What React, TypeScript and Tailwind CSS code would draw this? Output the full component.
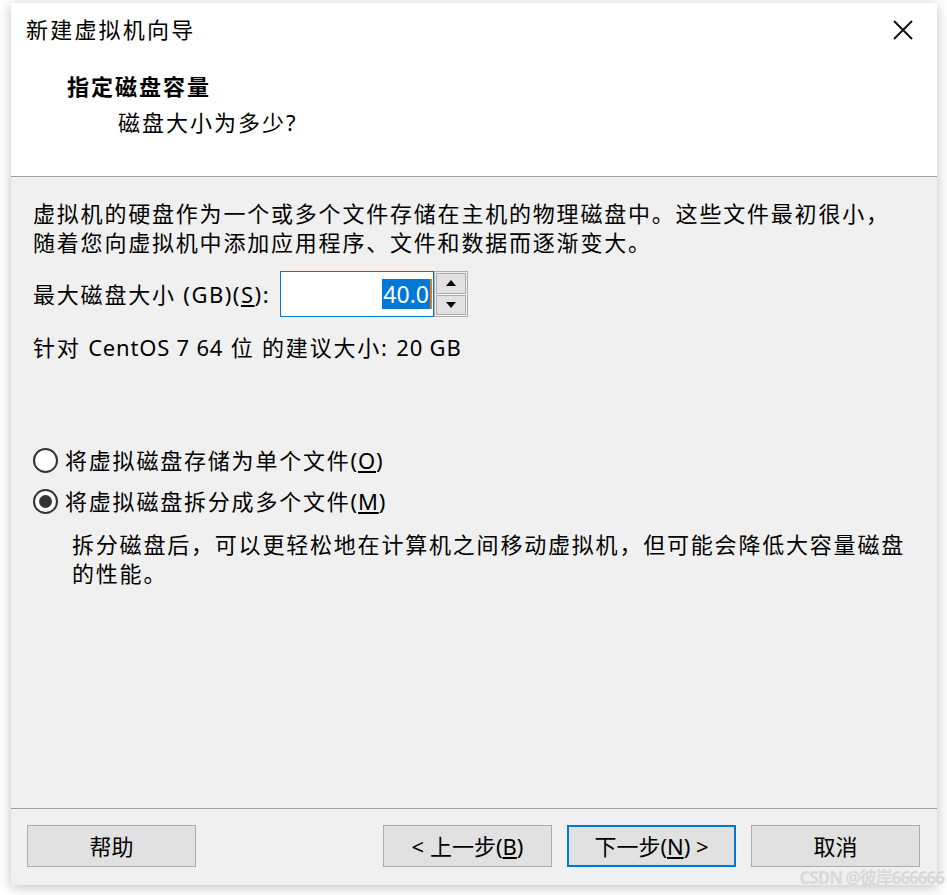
import React from "react";

const font = { fontFamily: '"Noto Sans", "Noto Sans CJK SC", sans-serif' };

function Radio({ checked }: { checked?: boolean }) {
  return (
    <span className="flex h-[25px] w-[25px] shrink-0 items-center justify-center rounded-full border-2 border-[#333333] bg-white">
      {checked && <span className="h-[13px] w-[13px] rounded-full bg-[#333333]" />}
    </span>
  );
}

function Btn({ children, primary }: { children: React.ReactNode; primary?: boolean }) {
  return (
    <button
      className={
        primary
          ? "h-[42px] w-[169px] border-2 border-[#0078d7] bg-[#e1e1e1] text-[22px] text-black"
          : "h-[42px] w-[169px] border border-[#adadad] bg-[#e1e1e1] text-[22px] text-black"
      }
    >
      {children}
    </button>
  );
}

export default function App() {
  return (
    <div className="relative h-[895px] w-[947px] overflow-hidden bg-white" style={font}>
      <div className="ml-[11px] mt-[3px] flex h-[882px] w-[926px] flex-col bg-[#f0f0f0] shadow-[0_2px_12px_rgba(0,0,0,0.25)]">
        {/* header */}
        <div className="h-[174px] border-b border-[#a0a0a0] bg-white">
          <div className="flex items-center justify-between pl-[15px] pr-[22px] pt-[10px]">
            <span className="text-[22px] tracking-[2.2px] text-black">新建虚拟机向导</span>
            <svg width="22" height="22" viewBox="0 0 22 22" className="mr-[1px]">
              <path d="M2 2 L20 20 M20 2 L2 20" stroke="#111" strokeWidth="2" />
            </svg>
          </div>
          <div className="pl-[56px] pt-[25px] text-[22px] font-bold tracking-[2px] leading-[30px] text-black">
            指定磁盘容量
          </div>
          <div className="pl-[107px] pt-[6px] text-[22px] tracking-[2px] leading-[30px] text-black">
            磁盘大小为多少?
          </div>
        </div>

        {/* body */}
        <div className="flex-1 px-[22px] pt-[22px] text-[22px] leading-[29px] tracking-[1.8px] text-black">
          <p>
            虚拟机的硬盘作为一个或多个文件存储在主机的物理磁盘中。这些文件最初很小，
            <br />
            随着您向虚拟机中添加应用程序、文件和数据而逐渐变大。
          </p>

          <div className="mt-[14px] flex items-center">
            <span className="w-[247px]">
              最大磁盘大小 <span className="tracking-[1.5px]">(GB)(<u>S</u>):</span>
            </span>
            <div className="flex h-[46px] w-[154px] items-center justify-end border border-[#0078d7] bg-white pr-[1px]">
              <span className="bg-[#0078d7] px-[1px] text-[23px] leading-[30px] tracking-normal text-white">40.0</span>
              <span className="h-[30px] w-[2px] bg-[#e37a1e]" />
            </div>
            <div className="flex h-[46px] w-[34px] flex-col border border-[#adadad] bg-[#f0f0f0] p-[1px]">
              <div className="flex flex-1 items-center justify-center border border-[#adadad] bg-[#e1e1e1]">
                <svg width="10" height="6" viewBox="0 0 10 6">
                  <path d="M0 6 L5 0 L10 6 Z" fill="#000" />
                </svg>
              </div>
              <div className="mt-[1px] flex flex-1 items-center justify-center border border-[#adadad] bg-[#e1e1e1]">
                <svg width="10" height="6" viewBox="0 0 10 6">
                  <path d="M0 0 L5 6 L10 0 Z" fill="#000" />
                </svg>
              </div>
            </div>
          </div>

          <p className="mt-[16px]">
            针对 <span className="tracking-[0.8px]">CentOS 7 64</span> 位 的建议大小:{" "}
            <span className="tracking-[0.8px]">20 GB</span>
          </p>

          <div className="mt-[84px] flex items-center gap-[7px]">
            <Radio />
            <span>
              将虚拟磁盘存储为单个文件<span className="tracking-[0.8px]">(<u>O</u>)</span>
            </span>
          </div>
          <div className="mt-[12px] flex items-center gap-[7px]">
            <Radio checked />
            <span>
              将虚拟磁盘拆分成多个文件<span className="tracking-[0.8px]">(<u>M</u>)</span>
            </span>
          </div>
          <p className="mt-[14px] pl-[39px]">
            拆分磁盘后，可以更轻松地在计算机之间移动虚拟机，但可能会降低大容量磁盘
            <br />
            的性能。
          </p>
        </div>

        {/* footer */}
        <div className="h-[77px] border-t border-[#a0a0a0]">
          <div className="flex items-center pl-[16px] pr-[17px] pt-[16px]">
            <Btn>帮助</Btn>
            <div className="ml-auto flex gap-[15px]">
              <Btn>
                &lt; 上一步(<u>B</u>)
              </Btn>
              <Btn primary>
                下一步(<u>N</u>) &gt;
              </Btn>
              <Btn>取消</Btn>
            </div>
          </div>
        </div>
      </div>
      <span className="absolute bottom-[5px] right-[3px] text-[17px] font-bold text-[#d8d8d8] tracking-[-1px]">
        CSDN @彼岸666666
      </span>
    </div>
  );
}
